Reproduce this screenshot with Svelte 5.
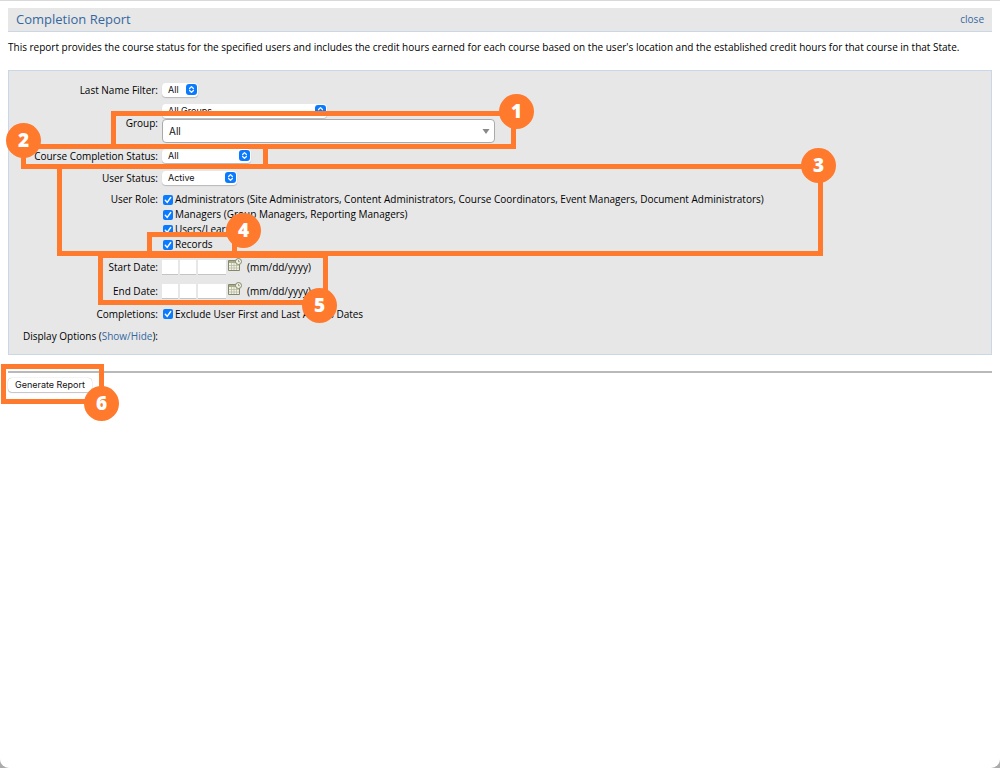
<script>
  const roles = [
    'Administrators (Site Administrators, Content Administrators, Course Coordinators, Event Managers, Document Administrators)',
    'Managers (Group Managers, Reporting Managers)',
    'Users/Learners',
    'Records'
  ];
  const dates = [
    { id: 'start', label: 'Start Date:' },
    { id: 'end', label: 'End Date:' }
  ];
</script>

{#snippet picker(id, options, kind, name)}
  <span class="pick {kind}">
    <select {id} aria-label={name}>
      {#each options as option}<option>{option}</option>{/each}
    </select>
    <svg class="knob" viewBox="0 0 11 11" aria-hidden="true">
      <rect width="11" height="11" rx="3" fill="#0a7aff" />
      <path d="M3.6 4.5 5.5 2.6 7.4 4.5M3.6 6.5 5.5 8.4 7.4 6.5" fill="none" stroke="#fff" stroke-width="1.2" stroke-linecap="round" stroke-linejoin="round" />
    </svg>
  </span>
{/snippet}

{#snippet tick(id, text)}
  <div class="tick">
    <input type="checkbox" {id} checked />
    <label for={id}>{text}</label>
  </div>
{/snippet}

<main>
  <header>
    <h1>Completion Report</h1>
    <a href="#close">close</a>
  </header>
  <p>This report provides the course status for the specified users and includes the credit hours earned for each course based on the user's location and the established credit hours for that course in that State.</p>

  <form id="report">
    <div class="row">
      <label class="name" for="last">Last Name Filter:</label>
      {@render picker('last', ['All', 'A', 'B', 'C'], 'tiny', 'Last Name Filter')}
    </div>
    <div class="row group">
      <label class="name" for="group">Group:</label>
      <div class="stack">
        {@render picker('groups', ['All Groups'], 'wide', 'Group type')}
        <span class="combo">
          <select id="group"><option>All</option></select>
          <svg viewBox="0 0 8 5" aria-hidden="true"><path d="M.5 0h7L4 5z" fill="#888" /></svg>
        </span>
      </div>
    </div>
    <div class="row">
      <label class="name" for="course">Course Completion Status:</label>
      {@render picker('course', ['All', 'Completed'], 'medium', 'Course Completion Status')}
    </div>
    <div class="row">
      <label class="name" for="status">User Status:</label>
      {@render picker('status', ['Active', 'Inactive'], 'small', 'User Status')}
    </div>
    <div class="row roles" role="group" aria-labelledby="roles">
      <span class="name" id="roles">User Role:</span>
      <div class="stack">
        {#each roles as role, i}{@render tick(`role${i}`, role)}{/each}
      </div>
    </div>
    {#each dates as date}
      <div class="row date">
        <label class="name" for={`${date.id}-month`}>{date.label}</label>
        <div class="fields">
          <input id={`${date.id}-month`} type="text" maxlength="2" />
          <input aria-label="Day" type="text" maxlength="2" />
          <input class="year" aria-label="Year" type="text" maxlength="4" />
          <button type="button" aria-label="Open calendar">
            <svg viewBox="0 0 14 14">
              <path d="M.5 2.5h11v10H.5z" fill="#f1f1e4" stroke="#85886a" />
              <path d="M1 3h10v2H1z" fill="#a9ab8c" />
              <path d="M1 7.5h10M1 10h10M3.5 5v7M6 5v7M8.5 5v7" stroke="#b9bba2" stroke-width=".8" />
              <circle cx="10.5" cy="3.5" r="3" fill="#f1f1e4" stroke="#85886a" />
              <path d="M10.5 1.8v1.9h1.3" fill="none" stroke="#85886a" stroke-width=".8" />
            </svg>
          </button>
          <span>(mm/dd/yyyy)</span>
        </div>
      </div>
    {/each}
    <div class="row">
      <span class="name">Completions:</span>
      {@render tick('exclude', 'Exclude User First and Last Access Dates')}
    </div>
    <div class="row">
      <span class="name">Display Options (<a href="#options">Show/Hide</a>):</span>
    </div>
  </form>

  <hr />
  <button class="generate" type="submit" form="report">Generate Report</button>

  <div class="mark m1"><b>1</b></div>
  <div class="mark m2"><b>2</b></div>
  <div class="mark m3"><b>3</b></div>
  <div class="mark m4"><b>4</b></div>
  <div class="mark m5"><b>5</b></div>
  <div class="mark m6"><b>6</b></div>
</main>

<style>
  :global(body) {
    background: #ababab;
  }
  main {
    position: relative;
    box-sizing: border-box;
    min-height: 100vh;
    padding: 7px 8px;
    border-top: 1px solid #d9d9d9;
    border-radius: 0 0 9px 9px;
    background: #fff;
    color: #000;
    font: 10px/15px "Open Sans", "Noto Sans", sans-serif;
  }
  a {
    color: #35679f;
    text-decoration: none;
  }
  header {
    display: flex;
    align-items: center;
    justify-content: space-between;
    height: 23px;
    padding: 0 8px;
    border-bottom: 1px solid #c9d7e6;
    background: #e7e7e7;
  }
  h1 {
    margin: 0;
    color: #35679f;
    font-size: 13px;
    font-weight: 400;
  }
  p {
    margin: 8px 0 15px;
  }
  form {
    padding: 8px 0 7px;
    border: 1px solid #c9d7e6;
    background: #e7e7e7;
  }
  .row {
    display: grid;
    grid-template-columns: 149px 1fr;
    column-gap: 4px;
    align-items: center;
    min-height: 22px;
  }
  .name {
    text-align: right;
    white-space: nowrap;
  }
  .group {
    min-height: 44px;
  }
  .stack {
    display: flex;
    flex-direction: column;
    align-items: flex-start;
  }
  .group .stack {
    gap: 1px;
  }
  .pick,
  .combo {
    position: relative;
    display: block;
  }
  select {
    appearance: none;
    box-sizing: border-box;
    width: 100%;
    height: 14px;
    display: block;
    margin: 0;
    padding: 0 6px;
    border: 0;
    border-radius: 4px;
    background: #fff;
    box-shadow: 0 1px 1px #0003;
    color: #111;
    font: 9px/14px Inter, sans-serif;
  }
  .knob {
    position: absolute;
    top: 1px;
    right: 1px;
    width: 11px;
    height: 11px;
    pointer-events: none;
  }
  .tiny { width: 36px; }
  .wide { width: 165px; }
  .medium { width: 89px; }
  .small { width: 75px; }
  .combo {
    width: 333px;
  }
  .combo select {
    height: 24px;
    border: 1px solid #aaa;
    box-shadow: none;
    font-size: 10px;
  }
  .combo svg {
    position: absolute;
    top: 10px;
    right: 5px;
    width: 8px;
    height: 5px;
    pointer-events: none;
  }
  .roles {
    align-items: start;
    padding: 3px 0;
  }
  .tick {
    display: flex;
    align-items: center;
    height: 15px;
  }
  .tick input {
    appearance: none;
    width: 10px;
    height: 10px;
    margin: 0 2px 0 1px;
    border-radius: 2px;
    background: #0a7aff url("data:image/svg+xml,%3Csvg xmlns='http://www.w3.org/2000/svg' viewBox='0 0 10 10'%3E%3Cpath d='M2.3 5.3 4.2 7.4 7.7 2.5' fill='none' stroke='white' stroke-width='1.4' stroke-linecap='round'/%3E%3C/svg%3E");
  }
  .date {
    min-height: 24px;
  }
  .fields {
    display: flex;
    align-items: center;
    gap: 2px;
  }
  .fields input {
    box-sizing: border-box;
    width: 16px;
    height: 15px;
    padding: 0;
    border: 0;
    border-bottom: 1px solid #c4c4c4;
    background: #fff;
    font: inherit;
  }
  .fields .year {
    width: 28px;
  }
  .fields button {
    display: flex;
    align-items: flex-start;
    width: 14px;
    height: 18px;
    padding: 0;
    border: 0;
    background: none;
  }
  .fields svg {
    width: 14px;
    height: 14px;
  }
  .fields span {
    padding-left: 3px;
  }
  hr {
    margin: 16px 0 5px;
    border: 0;
    border-top: 2px solid #b9b9b9;
  }
  .generate {
    display: block;
    height: 14px;
    padding: 0 7px;
    border: 0;
    border-radius: 4px;
    background: #fff;
    box-shadow: 0 0 1px #0006, 0 1px 1px #0003;
    color: #111;
    font: 9px/14px Inter, sans-serif;
  }
  .mark {
    position: absolute;
    box-sizing: border-box;
    border: 5px solid #ff7a2d;
    pointer-events: none;
  }
  .mark b {
    position: absolute;
    width: 35px;
    height: 35px;
    border-radius: 50%;
    background: #ff7a2d;
    color: #fff;
    font: 800 19px/35px "Open Sans", sans-serif;
    text-align: center;
  }
  .m1 { left: 111px; top: 110px; width: 405px; height: 38px; }
  .m1 b { right: -23px; top: -22px; }
  .m2 { left: 21px; top: 143px; width: 247px; height: 25px; }
  .m2 b { left: -20px; top: -26px; }
  .m3 { left: 57px; top: 163px; width: 766px; height: 92px; }
  .m3 b { right: -18px; top: -21px; }
  .m4 { left: 147px; top: 231px; width: 90px; height: 24px; }
  .m4 b { right: -29px; top: -24px; }
  .m5 { left: 98px; top: 252px; width: 230px; height: 52px; }
  .m5 b { right: -14px; bottom: -23px; }
  .m6 { left: 1px; top: 363px; width: 103px; height: 40px; }
  .m6 b { right: -20px; bottom: -22px; }
</style>
